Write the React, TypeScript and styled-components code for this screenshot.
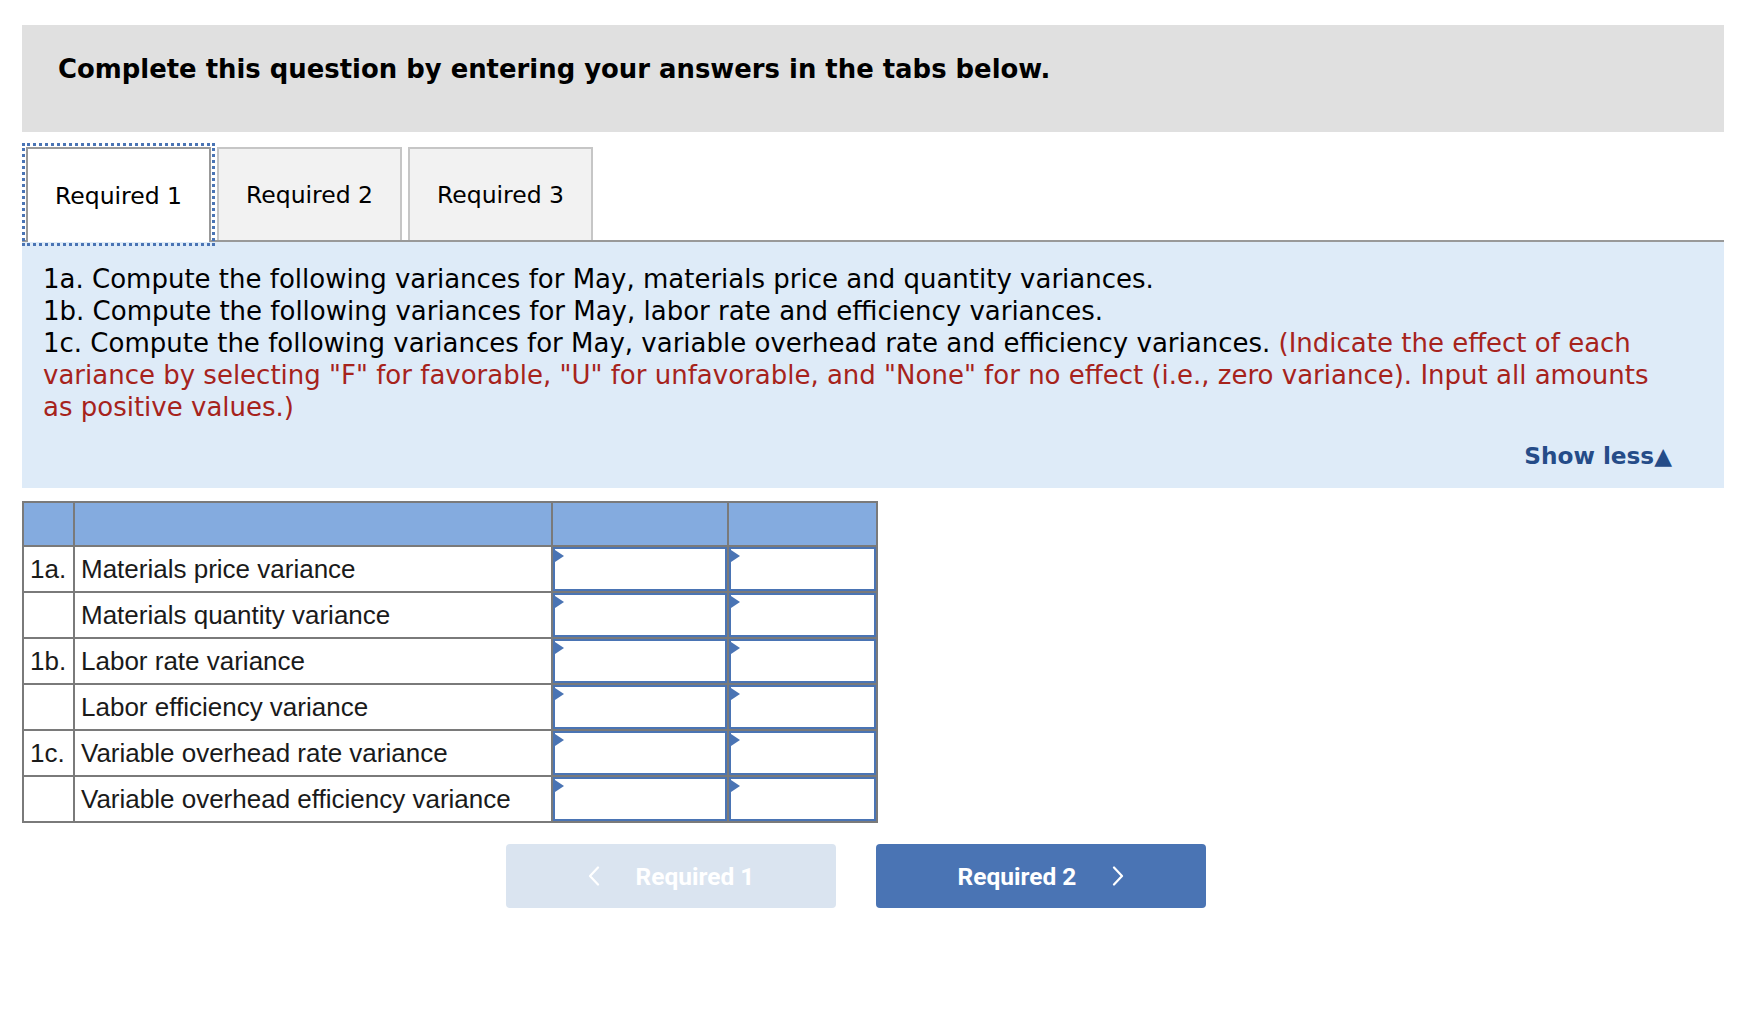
import React from "react";
import styled, { createGlobalStyle } from "styled-components";

const Global = createGlobalStyle`
  html, body { margin: 0; padding: 0; background: #ffffff; }
  body { font-family: "DejaVu Sans", sans-serif; }
`;

const Page = styled.div`
  width: 1702px;
  padding: 25px 0 40px 22px;
`;

const Banner = styled.div`
  height: 107px;
  box-sizing: border-box;
  background: #e0e0e0;
  padding: 28px 0 0 36px;
  font-family: "DejaVu Sans", sans-serif;
  font-weight: 700;
  font-size: 25.9px;
  line-height: 32px;
  color: #000;
`;

const TabList = styled.div`
  display: flex;
  align-items: flex-end;
  gap: 6px;
  margin-top: 15px;
  padding-left: 4px;
  border-bottom: 2px solid #999999;
`;

const Tab = styled.div<{ $active?: boolean }>`
  width: 185px;
  box-sizing: border-box;
  display: flex;
  align-items: center;
  justify-content: center;
  border: 2px solid ${(p) => (p.$active ? "#999999" : "#c6c6c6")};
  border-bottom: none;
  background: ${(p) => (p.$active ? "#ffffff" : "#f2f2f2")};
  margin-bottom: ${(p) => (p.$active ? "-2px" : "0")};
  height: ${(p) => (p.$active ? "95px" : "93px")};
  outline: ${(p) => (p.$active ? "3px dotted #4a74b4" : "none")};
  outline-offset: 1px;
  font-family: "DejaVu Sans", sans-serif;
  font-size: 23.5px;
  color: #000;
  cursor: pointer;
`;

const Panel = styled.div`
  background: #deebf8;
  padding: 21px 44px 16px 21px;
  font-family: "DejaVu Sans", sans-serif;
  font-size: 26px;
  line-height: 32px;
  color: #000;
`;

const Line = styled.div``;

const Note = styled.span`
  color: #a6231c;
`;

const ShowLess = styled.div`
  margin-top: 17px;
  padding-right: 8px;
  text-align: right;
  font-weight: 700;
  font-size: 23.2px;
  color: #254c88;
`;

const Grid = styled.table`
  margin-top: 13px;
  border-collapse: separate;
  border-spacing: 2px;
  background: #7a7a7a;
  table-layout: fixed;
  width: 856px;
  font-family: "Liberation Sans", Arial, sans-serif;
  font-size: 26px;
  color: #1a1a1a;
`;

const HeadCell = styled.th`
  background: #84abdf;
  height: 42px;
  padding: 0;
`;

const Cell = styled.td`
  background: #ffffff;
  height: 44px;
  padding: 0 5px 0 6px;
  vertical-align: middle;
  white-space: nowrap;
`;

const InputCell = styled.td`
  background: #ffffff;
  height: 44px;
  padding: 0;
`;

const Entry = styled.div`
  position: relative;
  height: 44px;
  box-sizing: border-box;
  border: 2px solid #4a74b4;
  background: #fff;
  &::before {
    content: "";
    position: absolute;
    left: 0;
    top: 1px;
    width: 0;
    height: 0;
    border-top: 6px solid transparent;
    border-bottom: 6px solid transparent;
    border-left: 9px solid #4a74b4;
  }
`;

const Nav = styled.div`
  display: flex;
  justify-content: center;
  gap: 40px;
  margin-top: 21px;
  padding-right: 34px;
`;

const NavButton = styled.button<{ $disabled?: boolean }>`
  width: 330px;
  height: 64px;
  border: none;
  border-radius: 4px;
  background: ${(p) => (p.$disabled ? "#dae4f0" : "#4a74b4")};
  color: #ffffff;
  display: flex;
  align-items: center;
  justify-content: center;
  gap: 36px;
  font-family: Roboto, "Liberation Sans", sans-serif;
  font-weight: 700;
  font-size: 24.5px;
  cursor: ${(p) => (p.$disabled ? "default" : "pointer")};
  padding: 0;
`;

const Chevron = ({ dir }: { dir: "left" | "right" }) => (
  <svg width="12" height="20" viewBox="0 0 12 20" fill="none">
    <polyline
      points={dir === "left" ? "10,1.5 2,10 10,18.5" : "2,1.5 10,10 2,18.5"}
      stroke="#ffffff"
      strokeWidth="2.2"
      strokeLinecap="round"
      strokeLinejoin="round"
    />
  </svg>
);

const rows: { num: string; label: string }[] = [
  { num: "1a.", label: "Materials price variance" },
  { num: "", label: "Materials quantity variance" },
  { num: "1b.", label: "Labor rate variance" },
  { num: "", label: "Labor efficiency variance" },
  { num: "1c.", label: "Variable overhead rate variance" },
  { num: "", label: "Variable overhead efficiency variance" },
];

export default function App() {
  return (
    <>
      <Global />
      <Page>
        <Banner>Complete this question by entering your answers in the tabs below.</Banner>
        <TabList>
          <Tab $active>Required 1</Tab>
          <Tab>Required 2</Tab>
          <Tab>Required 3</Tab>
        </TabList>
        <Panel>
          <Line>1a. Compute the following variances for May, materials price and quantity variances.</Line>
          <Line>1b. Compute the following variances for May, labor rate and efficiency variances.</Line>
          <Line>
            1c. Compute the following variances for May, variable overhead rate and efficiency variances.{" "}
            <Note>
              (Indicate the effect of each variance by selecting "F" for favorable, "U" for unfavorable, and
              "None" for no effect (i.e., zero variance). Input all amounts as positive values.)
            </Note>
          </Line>
          <ShowLess>Show less▲</ShowLess>
        </Panel>
        <Grid>
          <colgroup>
            <col style={{ width: 49 }} />
            <col style={{ width: 476 }} />
            <col style={{ width: 174 }} />
            <col style={{ width: 147 }} />
          </colgroup>
          <thead>
            <tr>
              <HeadCell />
              <HeadCell />
              <HeadCell />
              <HeadCell />
            </tr>
          </thead>
          <tbody>
            {rows.map((r, i) => (
              <tr key={i}>
                <Cell>{r.num}</Cell>
                <Cell>{r.label}</Cell>
                <InputCell>
                  <Entry />
                </InputCell>
                <InputCell>
                  <Entry />
                </InputCell>
              </tr>
            ))}
          </tbody>
        </Grid>
        <Nav>
          <NavButton $disabled>
            <Chevron dir="left" />
            <span>Required 1</span>
          </NavButton>
          <NavButton>
            <span>Required 2</span>
            <Chevron dir="right" />
          </NavButton>
        </Nav>
      </Page>
    </>
  );
}
